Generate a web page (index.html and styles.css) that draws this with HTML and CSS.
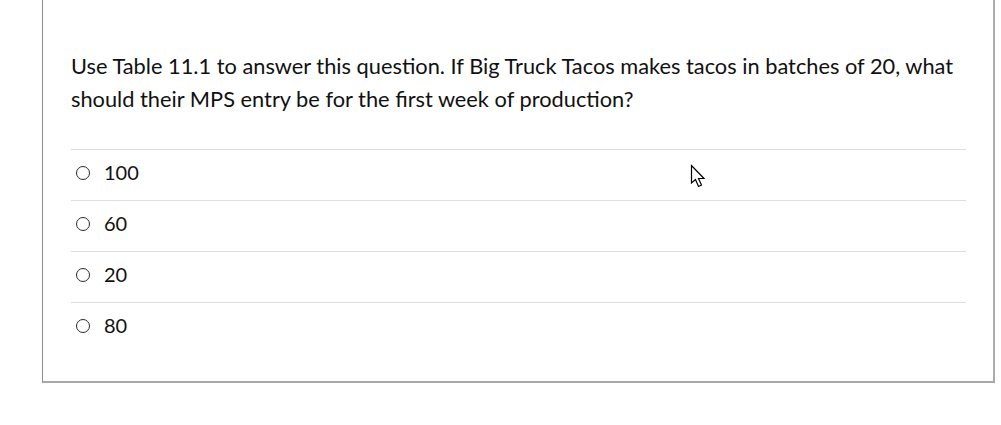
FILE: index.html
```html
<!DOCTYPE html>
<html>
<head>
<meta charset="utf-8">
<link rel="stylesheet" href="styles.css">
</head>
<body>
<div class="card">
  <p class="question">Use Table 11.1 to answer this question. If Big Truck Tacos makes tacos in batches of 20, what should their MPS entry be for the first week of production?</p>
  <ul class="answers">
    <li class="answer"><span class="radio"></span><span class="label">100</span></li>
    <li class="answer"><span class="radio"></span><span class="label">60</span></li>
    <li class="answer"><span class="radio"></span><span class="label">20</span></li>
    <li class="answer"><span class="radio"></span><span class="label">80</span></li>
  </ul>
</div>
<svg class="cursor" width="18" height="26" viewBox="0 0 18 26">
  <path d="M1.5 1.5 L1.5 19 L5.5 15.5 L8.5 22.5 L11.5 21 L8.5 14.5 L14 14.5 Z" fill="#fff" stroke="#000" stroke-width="1.2" stroke-linejoin="miter"/>
</svg>
</body>
</html>
```

FILE: styles.css
```css
html, body {
  margin: 0;
  padding: 0;
  background: #fff;
}
body {
  width: 1001px;
  height: 425px;
  position: relative;
  overflow: hidden;
  font-family: Lato, "Open Sans", sans-serif;
  color: #111;
}
.card {
  margin-left: 42px;
  width: 953px;
  height: 383px;
  border-left: 1px solid #8c8c8c;
  border-right: 2px solid #ababab;
  border-bottom: 2px solid #a8a8a8;
  padding: 49px 27px 0 28px;
  box-sizing: border-box;
}
.question {
  margin: 0;
  font-size: 21.8px;
  line-height: 33px;
}
.answers {
  list-style: none;
  margin: 34px 0 0 0;
  padding: 0;
}
.answer {
  display: flex;
  align-items: center;
  height: 51px;
  padding-bottom: 6px;
  box-sizing: border-box;
  border-top: 1px solid #dedede;
  font-size: 20px;
}
.radio {
  width: 12px;
  height: 12px;
  border: 1.8px solid #2a2a2a;
  border-radius: 50%;
  margin-left: 5px;
  margin-right: 14px;
  margin-top: 2px;
}
.label {
  line-height: 1;
}
.cursor {
  position: absolute;
  left: 690px;
  top: 164px;
}
```
